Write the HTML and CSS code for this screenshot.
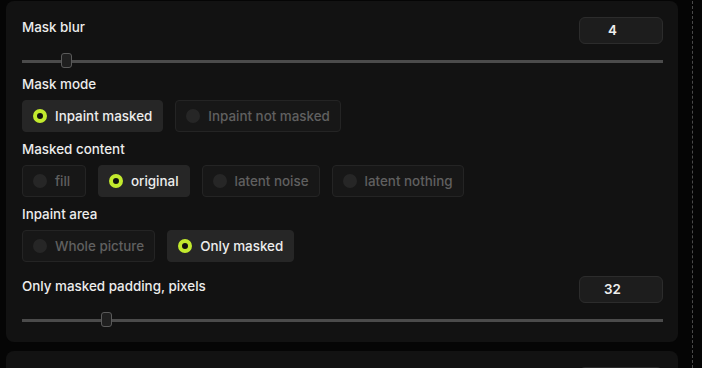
FILE: index.html
```html
<!DOCTYPE html>
<html>
<head>
<meta charset="utf-8">
<link rel="stylesheet" href="styles.css">
</head>
<body>
<div class="layout">
  <div class="column">
    <div class="panel">
      <div class="field-head">
        <span class="label">Mask blur</span>
        <div class="num">4</div>
      </div>
      <div class="slider"><div class="track"></div><div class="thumb" style="left:39px"></div></div>

      <div class="label">Mask mode</div>
      <div class="radios">
        <div class="radio on"><span class="dot"></span>Inpaint masked</div>
        <div class="radio"><span class="dot"></span>Inpaint not masked</div>
      </div>

      <div class="label">Masked content</div>
      <div class="radios">
        <div class="radio"><span class="dot"></span>fill</div>
        <div class="radio on"><span class="dot"></span>original</div>
        <div class="radio"><span class="dot"></span>latent noise</div>
        <div class="radio"><span class="dot"></span>latent nothing</div>
      </div>

      <div class="label">Inpaint area</div>
      <div class="radios">
        <div class="radio"><span class="dot"></span>Whole picture</div>
        <div class="radio on"><span class="dot"></span>Only masked</div>
      </div>

      <div class="field-head second">
        <span class="label">Only masked padding, pixels</span>
        <div class="num">32</div>
      </div>
      <div class="slider last"><div class="track"></div><div class="thumb" style="left:79px"></div></div>
    </div>
    <div class="panel next">
      <div class="field-head">
        <span class="label"></span>
        <div class="num"></div>
      </div>
    </div>
  </div>
  <div class="divider"></div>
</div>
</body>
</html>
```
FILE: styles.css
```css
html, body {
  margin: 0;
  padding: 0;
  background: #050505;
  height: 100%;
  overflow: hidden;
}
body {
  font-family: Inter, "Noto Sans", "Liberation Sans", sans-serif;
  font-size: 13.4px;
  color: #e6e6e6;
}
.layout {
  display: flex;
  padding-left: 6px;
  padding-top: 1px;
  height: 100%;
  box-sizing: border-box;
}
.column {
  width: 672px;
  display: flex;
  flex-direction: column;
  gap: 9px;
}
.divider {
  margin-left: 14px;
  width: 0;
  border-left: 1px dashed #4a4a4a;
  height: 100%;
}
.panel {
  background: #121212;
  border-radius: 8px;
  padding: 16px 15px 14px 16px;
}
.panel.next {
  height: 60px;
}
.field-head {
  display: flex;
  justify-content: space-between;
  align-items: flex-start;
}
.field-head.second {
  margin-top: 14px;
}
.label {
  font-weight: 500;
  line-height: 20px;
  color: #ececec;
}
.num {
  width: 84px;
  height: 27px;
  box-sizing: border-box;
  background: #1d1d1d;
  border: 1px solid #2c2c2c;
  border-radius: 6px;
  font-weight: 600;
  line-height: 25px;
  text-align: center;
  padding-right: 17px;
  color: #eeeeee;
}
.slider {
  position: relative;
  height: 16px;
  margin: 9px 0 5px;
}
.slider.last {
  margin-bottom: 0;
}
.track {
  position: absolute;
  left: 0;
  right: 0;
  top: 7px;
  height: 3px;
  background: #4b4b4b;
}
.thumb {
  position: absolute;
  top: 0;
  width: 11px;
  height: 15px;
  box-sizing: border-box;
  background: #1f1f1f;
  border: 1px solid #5a5a5a;
  border-radius: 3px;
}
.radios {
  display: flex;
  gap: 12px;
  margin-top: 6px;
  margin-bottom: 7px;
}
.radio {
  display: flex;
  align-items: center;
  height: 32px;
  min-width: 64px;
  box-sizing: border-box;
  padding: 0 10px;
  border-radius: 4px;
  background: #171717;
  border: 1px solid #242424;
  color: #606060;
  font-weight: 500;
}
.radio.on {
  background: #262626;
  border-color: #262626;
  color: #ededed;
}
.dot {
  width: 14px;
  height: 14px;
  border-radius: 50%;
  background: #262626;
  margin-right: 8px;
  box-sizing: border-box;
}
.radio.on .dot {
  background: #111;
  border: 4.5px solid #c2ea2e;
}
```
